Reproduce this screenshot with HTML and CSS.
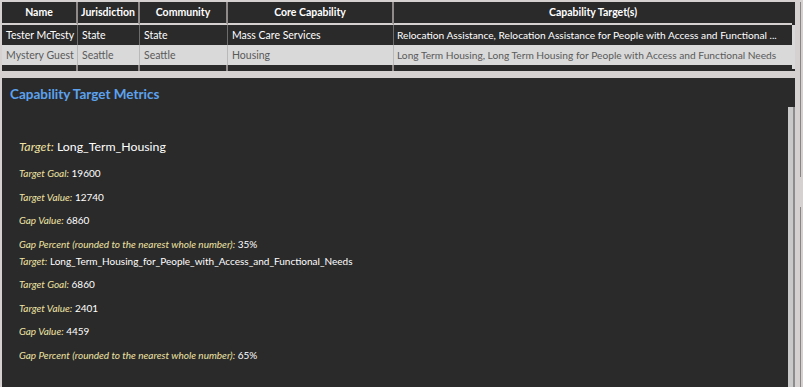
FILE: index.html
```html
<!DOCTYPE html>
<html>
<head>
<meta charset="utf-8">
<link rel="stylesheet" href="styles.css">
</head>
<body>
<div class="page">
  <div class="grid-panel">
    <table class="grid">
      <colgroup>
        <col class="c-name"><col class="c-jur"><col class="c-com"><col class="c-core"><col class="c-tgt">
      </colgroup>
      <thead>
        <tr><th>Name</th><th>Jurisdiction</th><th>Community</th><th>Core Capability</th><th>Capability Target(s)</th></tr>
      </thead>
      <tbody>
        <tr class="row-dark"><td>Tester McTesty</td><td>State</td><td>State</td><td>Mass Care Services</td><td class="tgt">Relocation Assistance, Relocation Assistance for People with Access and Functional ...</td></tr>
        <tr class="row-light"><td>Mystery Guest</td><td>Seattle</td><td>Seattle</td><td>Housing</td><td class="tgt">Long Term Housing, Long Term Housing for People with Access and Functional Needs</td></tr>
        <tr class="row-pad"><td></td><td></td><td></td><td></td><td></td></tr>
      </tbody>
    </table>
    <div class="grid-scroll"></div>
  </div>
  <div class="metrics-panel">
    <div class="metrics">
      <h2 class="title">Capability Target Metrics</h2>
      <div class="block">
        <p class="target-big"><i>Target:</i> Long_Term_Housing</p>
        <p class="m"><i>Target Goal:</i> 19600</p>
        <p class="m"><i>Target Value:</i> 12740</p>
        <p class="m"><i>Gap Value:</i> 6860</p>
        <p class="m last"><i>Gap Percent (rounded to the nearest whole number):</i> 35%</p>
        <p class="m"><i>Target:</i> Long_Term_Housing_for_People_with_Access_and_Functional_Needs</p>
        <p class="m"><i>Target Goal:</i> 6860</p>
        <p class="m"><i>Target Value:</i> 2401</p>
        <p class="m"><i>Gap Value:</i> 4459</p>
        <p class="m"><i>Gap Percent (rounded to the nearest whole number):</i> 65%</p>
      </div>
    </div>
    <div class="metrics-scroll"></div>
  </div>
  <div class="page-scroll"><div class="page-thumb"></div></div>
</div>
</body>
</html>
```
FILE: styles.css
```css
html, body {
  margin: 0;
  padding: 0;
  background: #d6d1d1;
  width: 803px;
  height: 387px;
  overflow: hidden;
  font-family: Lato, "Open Sans", sans-serif;
}
.page {
  position: relative;
  width: 803px;
  height: 387px;
}
.grid-panel {
  margin: 2px 0 0 2px;
  width: 793px;
  height: 69px;
  background: #2a2a2a;
  display: flex;
  align-items: flex-start;
}
.grid {
  border-collapse: separate;
  border-spacing: 0;
  table-layout: fixed;
  width: 790px;
  font-size: 10.5px;
}
.c-name { width: 76px; }
.c-jur { width: 62px; }
.c-com { width: 88px; }
.c-core { width: 166px; }
.c-tgt { width: 398px; }
.grid th {
  height: 21px;
  padding: 0;
  line-height: 21px;
  color: #ffffff;
  font-weight: 700;
  text-align: center;
  background: #2a2a2a;
  border-right: 2px solid #8f8b8b;
  border-bottom: 2px solid #d6d1d1;
  box-sizing: border-box;
}
.grid th:last-child { border-right: none; }
.grid td {
  height: 20px;
  line-height: 20px;
  padding: 0 4px;
  white-space: nowrap;
  overflow: hidden;
  border-right: 1px solid #8a8a8a;
  box-sizing: border-box;
}
.grid td:last-child { border-right: none; }
.grid td.tgt {
  font-size: 10.2px;
  padding-left: 3px;
}
.row-dark td {
  color: #ffffff;
  background: #2a2a2a;
  border-right-color: #6d6d6d;
}
.row-light td {
  color: #5a5a5a;
  background: #d9d9d9;
  border-right-color: #b9b9b9;
}
.row-pad td {
  height: 6px;
  line-height: 6px;
  background: #2a2a2a;
  border-right: 2px solid #8f8b8b;
}
.grid-scroll {
  width: 3px;
  height: 44px;
  margin-top: 23px;
  background: #d9d9d9;
}
.metrics-panel {
  margin: 7px 0 0 2px;
  width: 793px;
  height: 309px;
  display: flex;
}
.metrics {
  width: 786px;
  background: #2a2a2a;
  box-sizing: border-box;
  padding: 7px 0 0 8px;
}
.title {
  margin: 0;
  font-size: 13.5px;
  font-weight: 700;
  color: #5ca2ee;
  line-height: 18px;
}
.block {
  padding: 35px 0 0 9px;
}
.block p {
  margin: 0;
  color: #ffffff;
}
.block i {
  color: #efe3a3;
}
.target-big {
  font-size: 12.3px;
  line-height: 18px;
  margin-bottom: 11px !important;
}
.m {
  font-size: 10px;
  line-height: 13px;
  margin-bottom: 10.5px !important;
}
.m.last { margin-bottom: 4px !important; }
.metrics-scroll {
  width: 7px;
  background: #2a2a2a;
  display: flex;
  flex-direction: column;
}
.metrics-scroll::after {
  content: "";
  display: block;
  margin-top: 29px;
  flex: 1;
  background: #c9c9c9;
  border-right: 2px solid #8c8c8c;
  box-sizing: border-box;
}
.page-scroll {
  position: absolute;
  right: 2px;
  top: 0;
  width: 1px;
  height: 387px;
  background: #8a8585;
}
.page-thumb {
  margin-top: 175px;
  height: 30px;
  background: #d6d1d1;
}
```
